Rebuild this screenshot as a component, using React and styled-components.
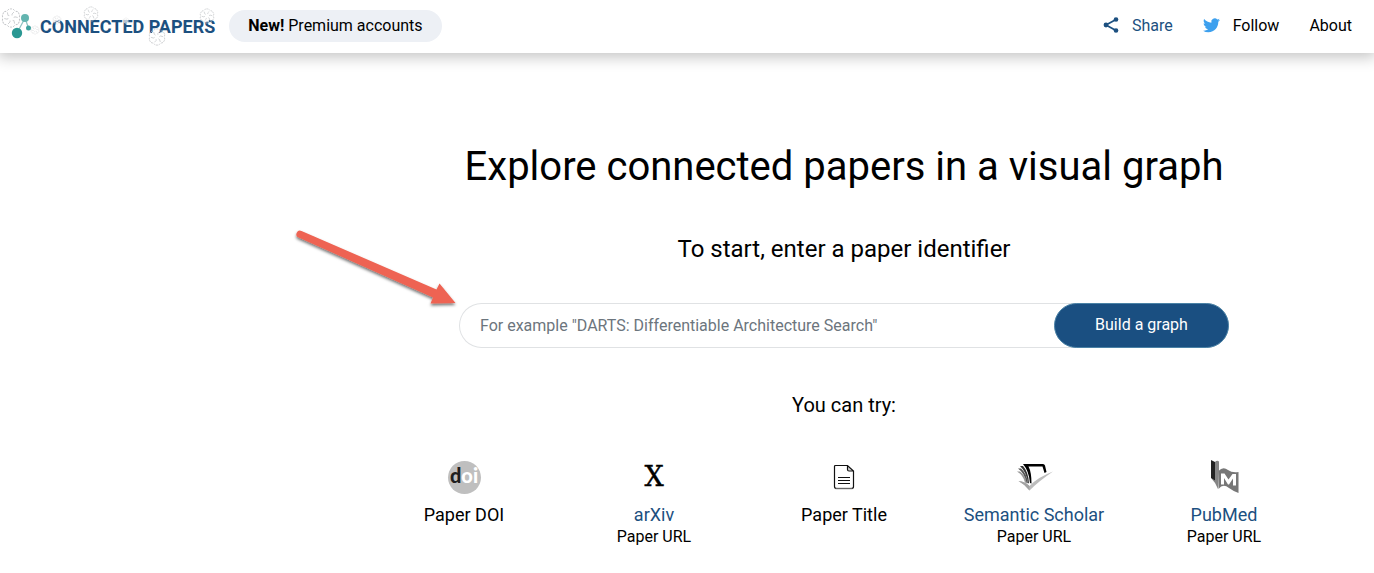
import React, {useState} from 'react'
import styled, {createGlobalStyle} from 'styled-components'

const GlobalStyle = createGlobalStyle`
  * {
    box-sizing: border-box;
  }

  body {
    margin: 0;
    background: #fff;
    color: #000;
    font-family: Roboto, sans-serif;
    font-size: 16px;
    line-height: 24px;
  }
`

const Header = styled.header`
  position: relative;
  display: flex;
  align-items: center;
  height: 53px;
  padding: 0 22px 2px 10px;
  background: #fff;
  box-shadow: 0 2px 14px 2px rgba(0, 0, 0, 0.24);
`

const Brand = styled.a`
  position: relative;
  display: flex;
  align-items: center;
  gap: 6px;
  padding-top: 2px;
  color: #1c5080;
  font-size: 18px;
  font-weight: 700;
  text-decoration: none;
  white-space: nowrap;
`

const Snow = styled.svg`
  position: absolute;
  top: -12px;
  left: -10px;
  pointer-events: none;
`

const PremiumLink = styled.a`
  margin-left: 14px;
  padding: 4px 19px;
  border-radius: 16px;
  background: #edf0f5;
  color: #000;
  text-decoration: none;
  white-space: nowrap;
`

const Nav = styled.nav`
  display: flex;
  gap: 30px;
  margin-left: auto;
`

const NavLink = styled.a`
  display: flex;
  align-items: center;
  gap: 13px;
  color: ${props => props.$accent ? '#1c5080' : '#000'};
  text-decoration: none;
`

const Main = styled.main`
  position: relative;
  display: flex;
  flex-direction: column;
  align-items: center;
  padding: 86px 0 24px 314px;
`

const Title = styled.h1`
  margin: 0;
  font-size: 40px;
  font-weight: 400;
  line-height: 56px;
`

const Subtitle = styled.h2`
  margin: 38px 0 0;
  font-size: 24px;
  font-weight: 400;
  line-height: 32px;
`

const SearchForm = styled.form`
  display: flex;
  width: 100%;
  max-width: 770px;
  margin-top: 38px;
  border-radius: 23px;
  box-shadow: inset 0 0 0 1px #e0e2e4;
`

const SearchInput = styled.input`
  flex: 1;
  min-width: 0;
  padding: 0 21px;
  border: 0;
  border-radius: 23px;
  background: transparent;
  color: #000;
  font: inherit;

  &::placeholder {
    color: #6c757d;
    opacity: 1;
  }
`

const SearchButton = styled.button`
  width: 175px;
  height: 45px;
  padding: 0 0 2px;
  border: 1px solid #4a82a6;
  border-radius: 23px;
  background: #1a4f81;
  color: #fff;
  font: inherit;
  cursor: pointer;
`

const TryLabel = styled.h3`
  margin: 41px 0 0;
  font-size: 20px;
  font-weight: 400;
  line-height: 32px;
`

const Sources = styled.ul`
  display: grid;
  grid-template-columns: repeat(5, 1fr);
  width: 100%;
  max-width: 950px;
  margin: 36px 0 0;
  padding: 0;
  list-style: none;
`

const Source = styled.li`
  display: flex;
  flex-direction: column;
  align-items: center;
`

const SourceIcon = styled.div`
  display: flex;
  align-items: center;
  justify-content: center;
  height: 40px;
  margin-bottom: 7px;
`

const SourceName = styled.span`
  color: ${props => props.href ? '#1c5080' : '#000'};
  font-size: 18px;
  line-height: 22px;
  text-decoration: none;
`

const SourceHint = styled.span`
  line-height: 22px;
`

const DoiBadge = styled.span`
  width: 33px;
  height: 33px;
  border-radius: 50%;
  background: #bfbfbf;
  color: #fff;
  font-family: Lato, sans-serif;
  font-size: 20px;
  font-weight: 900;
  line-height: 29px;
  text-align: center;

  b {
    color: #1e1e1e;
    font-weight: 900;
  }
`

const ArxivMark = styled.span`
  font-family: 'DejaVu Serif', serif;
  font-size: 27px;
  line-height: 40px;
  -webkit-text-stroke: 0.4px #000;
`

const Arrow = styled.svg`
  position: absolute;
  top: 166px;
  left: 280px;
  pointer-events: none;
`

const LogoIcon = () => (
    <svg width='24' height='26' viewBox='0 0 24 26' aria-hidden='true'>
        <path d='M7 19 15 4 18.500 14' fill='none' stroke='#8fc3c2' strokeWidth='1.300'/>
        <circle cx='15' cy='4' r='4' fill='#63b5b0'/>
        <circle cx='7' cy='19' r='5.200' fill='#2a9893'/>
        <circle cx='18.500' cy='14' r='2.500' fill='#3fa39f'/>
    </svg>
)

const flakes = [
    {x: 11, y: 18, r: 9},
    {x: 35, y: 30, r: 4},
    {x: 57, y: 20, r: 4},
    {x: 91, y: 14, r: 7},
    {x: 126, y: 21, r: 3},
    {x: 157, y: 37, r: 8},
    {x: 207, y: 16, r: 7}
]

const Snowflakes = () => (
    <Snow width='230' height='52' viewBox='0 0 230 52' aria-hidden='true'>
        {flakes.map(({x, y, r}) => (
            <g key={x} transform={`translate(${x} ${y}) scale(${r / 9})`} fill='none'>
                {[0, 60, 120, 180, 240, 300].map(angle => (
                    <g key={angle} transform={`rotate(${angle})`}>
                        <path d='M0 0V-8M-2.500 -7 0 -4.500 2.500 -7' stroke='#fff' strokeWidth='1.600'/>
                        <path d='M-3.500 -7.500Q-2 -9.500 0 -9 2 -9.500 3.500 -7.500' stroke='#c4c6c9' strokeDasharray='2 1'/>
                        <path d='M1 -2.500V-4L3 -6' stroke='#d0d2d4'/>
                    </g>
                ))}
            </g>
        ))}
    </Snow>
)

const ShareIcon = () => (
    <svg width='16' height='18' viewBox='0 0 16 18' aria-hidden='true'>
        <path d='M13 2.500 3 8 13 13.500' fill='none' stroke='#1c5080' strokeWidth='1.700'/>
        <g fill='#1c5080'>
            <circle cx='13' cy='2.500' r='2.300'/>
            <circle cx='3' cy='8' r='2.400'/>
            <circle cx='13' cy='13.500' r='2.300'/>
        </g>
    </svg>
)

const TwitterIcon = () => (
    <svg width='17' height='18' viewBox='0 1 24 24' fill='#3da0ee' aria-hidden='true'>
        <path d='M23.950 4.570a10 10 0 0 1-2.820.77 4.960 4.960 0 0 0 2.160-2.720c-.95.55-2 .95-3.130 1.180a4.920 4.920 0 0 0-8.380 4.480C7.690 8.090 4.070 6.130 1.640 3.160a4.820 4.820 0 0 0-.67 2.480c0 1.710.87 3.210 2.190 4.100a4.900 4.900 0 0 1-2.230-.62v.06a4.920 4.920 0 0 0 3.950 4.830 5 5 0 0 1-2.210.08 4.940 4.940 0 0 0 4.600 3.420A9.870 9.870 0 0 1 0 19.540a13.990 13.990 0 0 0 7.560 2.210c9.050 0 14-7.500 14-13.980 0-.21 0-.42-.02-.63a9.940 9.940 0 0 0 2.410-2.570z'/>
    </svg>
)

const PaperIcon = () => (
    <svg width='22' height='26' viewBox='0 0 22 26' aria-hidden='true'>
        <path d='M14.500 1.500v5h5z' fill='#d0d0d0'/>
        <path d='M2.500 1.500H14.500L20.500 7V22.500Q20.500 24.500 18.500 24.500H3.500Q1.500 24.500 1.500 22.500V2.500Q1.500 1.500 2.500 1.500ZM14.500 1.500V5.500Q14.500 7 16 7H20' fill='none' stroke='#111' strokeWidth='1.200'/>
        <path d='M2.500 24.500H19.500' stroke='#666' strokeWidth='1.400'/>
        <path d='M5 13.500H17M5 16.500H17M5 19.500H17' stroke='#111' strokeWidth='1.200'/>
    </svg>
)

const ScholarIcon = () => (
    <svg width='38' height='28' viewBox='0 0 38 28' aria-hidden='true'>
        <path d='M3.500 18Q10 18.500 14.500 23 23 14 38 8.500 24 18 14.500 27.500 10 21.500 3.500 18Z' fill='#bdbdbd'/>
        <path d='M3.500 18Q10 18.500 14.500 23V27.500Q10 21.500 3.500 18Z' fill='#a2a2a2'/>
        <path d='M2 8.500 5 8.500Q10 12 12 20.500L10 19.500Q8 12 2 8.500Z' fill='#999'/>
        <path d='M3 5.500 6 5.500Q11.500 10 13 20.500L11.500 19.500Q9.500 10 3 5.500Z' fill='#555'/>
        <path d='M5 3 8 3Q13.500 9 14 20.500L13 20Q11.500 9 5 3Z' fill='#333'/>
        <path d='M8 1H28Q29.500 1 30 2.500L31.500 9 29.500 10 27.500 3.500H13.500Q16.500 9 16.500 20.500L15 20Q14 8 8 1Z' fill='#000'/>
    </svg>
)

const PubMedIcon = () => (
    <svg width='30' height='34' viewBox='0 0 30 34' aria-hidden='true'>
        <path d='M2 0 6 2V21L2 18Z' fill='#222'/>
        <path d='M6 2Q8 0 10 1.500V10L9 29Q7 23 2 18L6 21Z' fill='#858585'/>
        <path d='M9.500 29V11Q14 6 19 10 23 13 29.500 12V33Q24 31 20 28 14 23 9.500 29Z' fill='#777'/>
        <path d='M12 24.500V13.500H15.500L19.500 19.500 23.500 14H27V25.500H24V18.500L20 24.500H19L15 18V24.500Z' fill='#fff'/>
    </svg>
)

const sources = [
    {name: 'Paper DOI', icon: <DoiBadge><b>d</b>oi</DoiBadge>},
    {name: 'arXiv', hint: 'Paper URL', href: '#arxiv', icon: <ArxivMark>X</ArxivMark>},
    {name: 'Paper Title', icon: <PaperIcon/>},
    {name: 'Semantic Scholar', hint: 'Paper URL', href: '#semantic-scholar', icon: <ScholarIcon/>},
    {name: 'PubMed', hint: 'Paper URL', href: '#pubmed', icon: <PubMedIcon/>}
]

const App = () => {

    const [query, setQuery] = useState('')

    return (
        <>
            <GlobalStyle/>
            <Header>
                <Brand href='#home'>
                    <LogoIcon/>
                    CONNECTED PAPERS
                    <Snowflakes/>
                </Brand>
                <PremiumLink href='#premium'><b>New!</b> Premium accounts</PremiumLink>
                <Nav>
                    <NavLink href='#share' $accent><ShareIcon/>Share</NavLink>
                    <NavLink href='#follow'><TwitterIcon/>Follow</NavLink>
                    <NavLink href='#about'>About</NavLink>
                </Nav>
            </Header>

            <Main>
                <Title>Explore connected papers in a visual graph</Title>
                <Subtitle id='search-label'>To start, enter a paper identifier</Subtitle>
                <SearchForm onSubmit={event => event.preventDefault()}>
                    <SearchInput
                        type='text'
                        aria-labelledby='search-label'
                        placeholder='For example "DARTS: Differentiable Architecture Search"'
                        value={query}
                        onChange={event => setQuery(event.target.value)}
                    />
                    <SearchButton type='submit'>Build a graph</SearchButton>
                </SearchForm>

                <TryLabel>You can try:</TryLabel>
                <Sources>
                    {sources.map(({name, hint, href, icon}) => (
                        <Source key={name}>
                            <SourceIcon>{icon}</SourceIcon>
                            <SourceName as={href ? 'a' : 'span'} href={href}>{name}</SourceName>
                            {hint && <SourceHint>{hint}</SourceHint>}
                        </Source>
                    ))}
                </Sources>

                <Arrow width='200' height='100' viewBox='0 0 200 100' aria-hidden='true'>
                    <defs>
                        <filter id='arrowShadow' x='-10%' y='-10%' width='120%' height='130%'>
                            <feDropShadow dx='0' dy='2' stdDeviation='1.500' floodOpacity='0.550'/>
                        </filter>
                    </defs>
                    <path
                        d='M21.500 12 156.500 70.500 159.500 64.500 175.500 84 150.500 84.500 153 78.500 18.500 18.500A3.500 3.500 0 0 1 21.500 12Z'
                        fill='#ee6352'
                        filter='url(#arrowShadow)'
                    />
                </Arrow>
            </Main>
        </>
    )
}

export default App
